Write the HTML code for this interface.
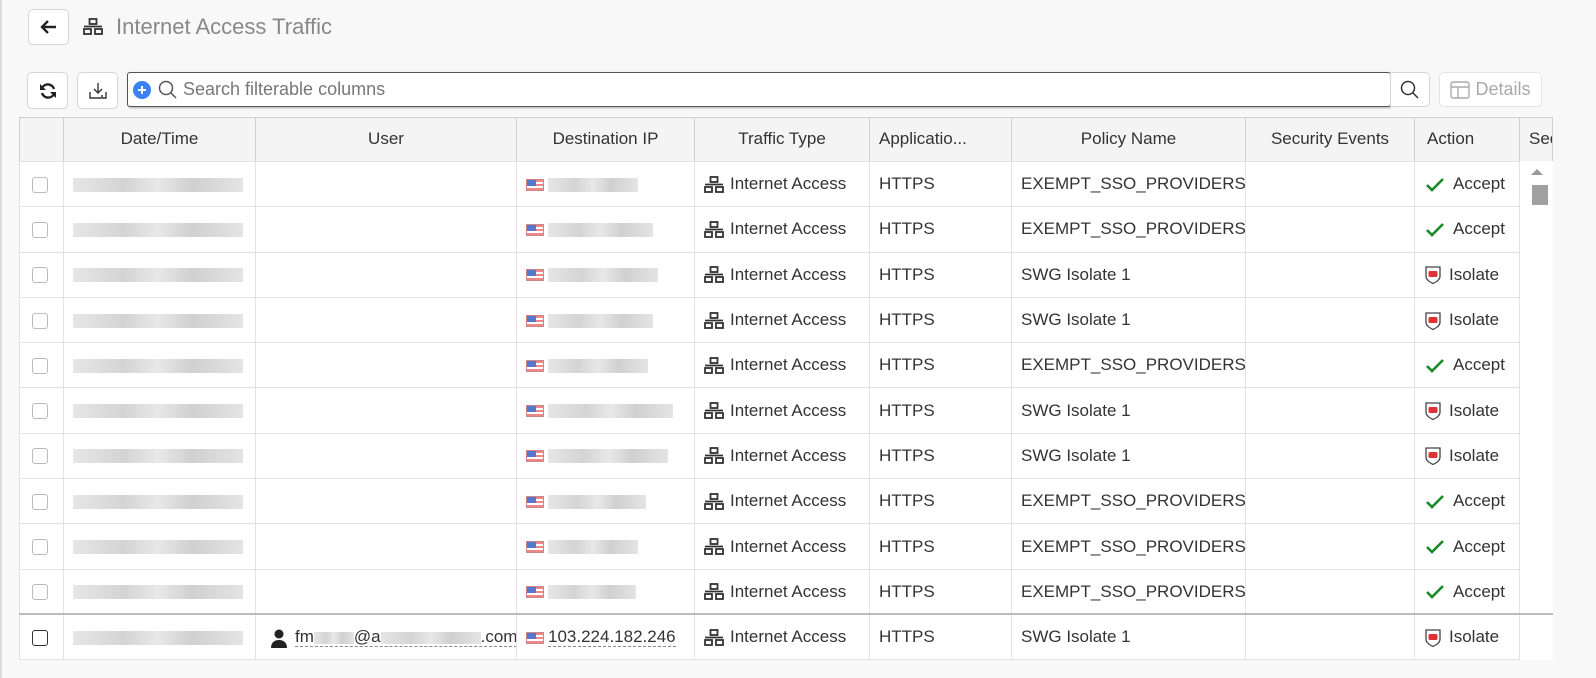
<!DOCTYPE html>
<html><head><meta charset="utf-8"><style>
*{box-sizing:border-box;margin:0;padding:0}
body{width:1596px;height:678px;overflow:hidden;background:#f8f8f8;font-family:"Liberation Sans",sans-serif;color:#333;position:relative;font-size:17px}
.lb{position:absolute;left:0;top:0;width:2px;height:678px;background:#ddd}
.btn{position:absolute;background:#fff;border:1px solid #d6d6d6;border-radius:5px;display:flex;align-items:center;justify-content:center}
.title{position:absolute;left:116px;top:14px;font-size:22px;color:#888}
.search{position:absolute;left:127px;top:72px;width:1264px;height:35px;background:#fff;border:1px solid #555;box-shadow:1px 1px 2px rgba(0,0,0,.3);border-radius:3px}
.search span{position:absolute;left:55px;top:6px;color:#777;font-size:18px}
table{border-collapse:collapse;table-layout:fixed;width:1533px;background:#fff}
th{background:#f4f4f4;height:44px;font-weight:normal;font-size:17px;border:1px solid #d0d0d0;border-bottom:2px solid #ccc;color:#333;text-align:center;white-space:nowrap;overflow:hidden}
td{height:45.3px;border:1px solid #e2e2e2;padding-left:9px;font-size:17px;color:#333;white-space:nowrap;overflow:hidden}
.cb{display:inline-block;width:16px;height:16px;border:1px solid #bbb;border-radius:3px;margin-left:3px;vertical-align:middle}
.blur{display:inline-block;height:14px;background:linear-gradient(90deg,#e6e6e6,#d4d4d4 30%,#e8e8e8 50%,#d0d0d0 70%,#e4e4e4);vertical-align:middle}
.flag{display:inline-block;width:18px;height:12px;background:repeating-linear-gradient(#e88 0 2px,#fff 2px 4px);position:relative;vertical-align:middle;margin-right:4px;border:1px solid #c88}
.flag:before{content:"";position:absolute;left:0;top:0;width:9px;height:6px;background:#57c}
.net{vertical-align:middle;margin-right:6px}
.chk{vertical-align:middle;margin-right:8px}
.shield{display:inline-block;vertical-align:middle;margin-right:8px}
</style></head><body>
<div class="lb"></div>
<div class="btn" style="left:28px;top:9px;width:41px;height:36px"><svg width="20" height="20" viewBox="0 0 20 20"><path d="M17 10H4M9 4l-6 6 6 6" stroke="#222" stroke-width="2.4" fill="none"/></svg></div>
<svg style="position:absolute;left:83px;top:18px" width="20" height="18" viewBox="0 0 20 18"><g fill="none" stroke="#333" stroke-width="1.8"><rect x="6.5" y="1" width="7" height="5"/><rect x="1" y="11" width="7" height="5"/><rect x="12" y="11" width="7" height="5"/><path d="M1 8.5h18"/></g></svg>
<div class="title">Internet Access Traffic</div>
<div class="btn" style="left:27px;top:72px;width:41px;height:37px"><svg width="20" height="20" viewBox="0 0 20 20"><g fill="none" stroke="#222" stroke-width="2.4"><path d="M16 8a6.5 6.5 0 0 0-12-1M4 12a6.5 6.5 0 0 0 12 1"/></g><path d="M2 3v6h6zM18 17v-6h-6z" fill="#222"/></svg></div>
<div class="btn" style="left:77px;top:72px;width:41px;height:37px"><svg width="22" height="20" viewBox="0 0 22 20"><g fill="none" stroke="#333" stroke-width="1.4"><path d="M11 2v10M7 8l4 4 4-4M3 11v6h16v-6"/></g><circle cx="15" cy="15" r="1" fill="#333"/></svg></div>
<div class="search"><svg style="position:absolute;left:5px;top:8px" width="18" height="18"><circle cx="9" cy="9" r="9" fill="#3b82f6"/><path d="M9 5v8M5 9h8" stroke="#fff" stroke-width="2"/></svg><svg style="position:absolute;left:30px;top:7px" width="20" height="20"><circle cx="8" cy="8" r="6.5" fill="none" stroke="#555" stroke-width="1.5"/><path d="M13 13l5 5" stroke="#555" stroke-width="1.5"/></svg><span>Search filterable columns</span></div>
<div class="btn" style="left:1390px;top:72px;width:40px;height:35px;border-radius:0 5px 5px 0"><svg width="20" height="20"><circle cx="8" cy="8" r="6.5" fill="none" stroke="#333" stroke-width="1.5"/><path d="M13 13l5 5" stroke="#333" stroke-width="1.5"/></svg></div>
<div class="btn" style="left:1439px;top:72px;width:103px;height:35px;color:#aaa;border-color:#e4e4e4;font-size:18px"><svg width="20" height="18" style="margin-right:5px"><g fill="none" stroke="#aaa" stroke-width="1.4"><rect x="1" y="1" width="18" height="16" rx="2"/><path d="M1 6h18M8 6v11"/></g></svg>Details</div>
<table style="position:absolute;left:19px;top:117px">
<colgroup><col style="width:44px"><col style="width:192px"><col style="width:261px"><col style="width:178px"><col style="width:175px"><col style="width:142px"><col style="width:234px"><col style="width:169px"><col style="width:105px"><col style="width:33px"></colgroup>
<tr><th></th><th>Date/Time</th><th>User</th><th>Destination IP</th><th>Traffic Type</th><th style="text-align:left;padding-left:9px">Applicatio...</th><th>Policy Name</th><th>Security Events</th><th style="text-align:left;padding-left:12px">Action</th><th style="text-align:left;padding-left:9px">Sec</th></tr>
</table>
<div id="rows"></div>
<script>
var pol=["EXEMPT_SSO_PROVIDERS","EXEMPT_SSO_PROVIDERS","SWG Isolate 1","SWG Isolate 1","EXEMPT_SSO_PROVIDERS","SWG Isolate 1","SWG Isolate 1","EXEMPT_SSO_PROVIDERS","EXEMPT_SSO_PROVIDERS","EXEMPT_SSO_PROVIDERS","SWG Isolate 1"];
var ipw=[90,105,110,105,100,125,120,98,90,88];
var net='<svg class="net" width="20" height="18" viewBox="0 0 20 18"><g fill="none" stroke="#333" stroke-width="1.8"><rect x="6.5" y="1" width="7" height="5"/><rect x="1" y="11" width="7" height="5"/><rect x="12" y="11" width="7" height="5"/><path d="M1 8.5h18"/></g></svg>';
var sh='<svg class="shield" width="16" height="18" viewBox="0 0 16 18"><path d="M1 1h14v9c0 4-4 6-7 7.5C5 16 1 14 1 10z" fill="#fff" stroke="#444" stroke-width="1.3"/><rect x="3.5" y="5" width="9" height="6" rx="1.5" fill="#d33"/></svg>';
var ck='<svg class="chk" width="20" height="16" viewBox="0 0 20 16"><path d="M2 8l5 5L18 2" fill="none" stroke="#1a8a2a" stroke-width="2.6"/></svg>';
var h='<table style="top:161px;position:absolute;left:19px"><colgroup><col style="width:44px"><col style="width:192px"><col style="width:261px"><col style="width:178px"><col style="width:175px"><col style="width:142px"><col style="width:234px"><col style="width:169px"><col style="width:105px"><col style="width:33px"></colgroup>';
for(var i=0;i<11;i++){var last=i==10;var acc=pol[i].indexOf("EX")==0;
h+='<tr'+(last?' style="border-top:2px solid #bbb"':'')+'><td><span class="cb"'+(last?' style="border-color:#333"':'')+'></span></td><td><span class="blur" style="width:170px"></span></td><td>'+(last?'<svg width="20" height="20" style="vertical-align:middle;margin:0 6px 0 4px"><circle cx="10" cy="6" r="4.5" fill="#222"/><path d="M2 20c0-6 4-8 8-8s8 2 8 8z" fill="#222"/></svg><span style="border-bottom:1px dashed #888">fm<span class="blur" style="width:40px;height:12px"></span>@a<span class="blur" style="width:100px;height:12px"></span>.com</span>':'')+'</td><td><span class="flag"></span>'+(last?'<span style="border-bottom:1px dashed #888">103.224.182.246</span>':'<span class="blur" style="width:'+ipw[i]+'px"></span>')+'</td><td>'+net+'Internet Access</td><td>HTTPS</td><td>'+pol[i]+'</td><td></td><td style="padding-left:10px">'+(acc?ck+'Accept':sh+'Isolate')+'</td><td style="border-right:none;border-bottom:none;border-top:none"></td></tr>';}
h+='</table>';document.getElementById('rows').innerHTML=h;
</script>
<div style="position:absolute;left:1531px;top:169px;width:0;height:0;border-left:6px solid transparent;border-right:6px solid transparent;border-bottom:6px solid #999"></div>
<div style="position:absolute;left:1532px;top:185px;width:16px;height:20px;background:#a0a0a0"></div>
</body></html>
